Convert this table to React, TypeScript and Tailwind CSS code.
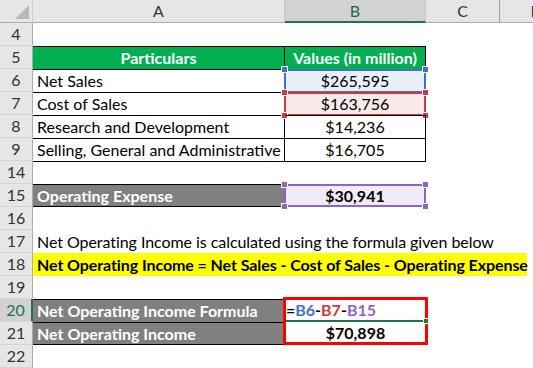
import React from 'react'

// reference highlight colours (Excel formula range boxes)
const refs = {
  blue: { box: 'border-[#3f6fcf]', dot: 'bg-[#3f6fcf]', fill: 'bg-[#e9eff9]' },
  red: { box: 'border-[#cc3a40]', dot: 'bg-[#cc3a40]', fill: 'bg-[#f9e9ea]' },
  purple: { box: 'border-[#8e63c7]', dot: 'bg-[#8e63c7]', fill: 'bg-[#efebf7]' },
}

type RefColor = keyof typeof refs

function RefBox({ color }: { color: RefColor }) {
  const r = refs[color]
  return (
    <span className={`pointer-events-none absolute -inset-px border-2 ${r.box}`}>
      <span className={`absolute -left-[5px] -top-[5px] size-[7px] border border-white ${r.dot}`} />
      <span className={`absolute -right-[5px] -top-[5px] size-[7px] border border-white ${r.dot}`} />
      <span className={`absolute -bottom-[5px] -left-[5px] size-[7px] border border-white ${r.dot}`} />
      <span className={`absolute -bottom-[5px] -right-[5px] size-[7px] border border-white ${r.dot}`} />
    </span>
  )
}

function RowHead({ n, active }: { n: number; active?: boolean }) {
  if (active) {
    return (
      <div className="flex w-[33px] shrink-0 items-center justify-center border-r-2 border-b border-r-[#217346] border-b-[#d4d4d4] bg-[#d2d2d2] text-[#217346]">
        {n}
      </div>
    )
  }
  return (
    <div className="flex w-[33px] shrink-0 items-center justify-center border-r border-b border-r-[#ababab] border-b-[#d4d4d4] bg-[#e6e6e6] text-[#333]">
      {n}
    </div>
  )
}

function Row({ n, active, children }: { n: number; active?: boolean; children?: React.ReactNode }) {
  return (
    <div className="flex h-[23px]">
      <RowHead n={n} active={active} />
      {children}
    </div>
  )
}

// table cells: A is 252px, B is 141px, both carry the black grid line on the right
const cellA = 'flex w-[252px] shrink-0 items-center border-t border-r border-black px-1'
const cellB = 'relative flex w-[141px] shrink-0 items-center justify-center border-t border-r border-black'

export default function App() {
  return (
    <div className="h-[368px] w-[533px] overflow-hidden bg-white font-['Lato','Liberation_Sans',sans-serif] text-[16px] text-black">
      {/* column headers */}
      <div className="flex h-[23px] text-[#333]">
        <div className="relative w-[33px] shrink-0 border-r border-b border-r-[#d0d0d0] border-b-[#ababab] bg-[#e6e6e6]">
          <svg className="absolute left-0 top-0" width="33" height="23" viewBox="0 0 33 23">
            <polygon points="15,19 29,19 29,5" fill="#b8b8b8" />
          </svg>
        </div>
        <div className="flex w-[252px] shrink-0 items-center justify-center border-r border-b border-r-[#c6c6c6] border-b-[#ababab] bg-[#e6e6e6]">
          A
        </div>
        <div className="flex w-[141px] shrink-0 items-center justify-center border-r border-b-2 border-r-[#c6c6c6] border-b-[#217346] bg-[#d2d2d2] text-[#1e6b41]">
          B
        </div>
        <div className="flex w-[74px] shrink-0 items-center justify-center border-r border-b border-r-[#9e9e9e] border-b-[#ababab] bg-[#e6e6e6]">
          C
        </div>
        <div className="flex w-[73px] shrink-0 items-center justify-center border-b border-b-[#ababab] bg-[#e6e6e6]">
          D
        </div>
      </div>

      <Row n={4} />

      <Row n={5}>
        <div className={`${cellA} justify-center bg-[#00b050] font-bold text-white`}>Particulars</div>
        <div className={`${cellB} bg-[#00b050] font-bold text-white`}>Values (in million)</div>
      </Row>

      <Row n={6}>
        <div className={cellA}>Net Sales</div>
        <div className={`${cellB} ${refs.blue.fill}`}>
          $265,595
          <RefBox color="blue" />
        </div>
      </Row>

      <Row n={7}>
        <div className={cellA}>Cost of Sales</div>
        <div className={`${cellB} ${refs.red.fill}`}>
          $163,756
          <RefBox color="red" />
        </div>
      </Row>

      <Row n={8}>
        <div className={cellA}>Research and Development</div>
        <div className={cellB}>$14,236</div>
      </Row>

      <Row n={9}>
        <div className={`${cellA} whitespace-nowrap`}>Selling, General and Administrative</div>
        <div className={cellB}>$16,705</div>
      </Row>

      <Row n={14}>
        <div className="w-[252px] shrink-0 border-t border-black" />
        <div className="w-[141px] shrink-0 border-t border-black" />
      </Row>

      <Row n={15}>
        <div className="flex w-[252px] shrink-0 items-center border-y border-r border-black bg-[#808080] px-1 font-bold text-white">
          Operating Expense
        </div>
        <div className={`relative flex w-[141px] shrink-0 items-center justify-center border-y border-r border-black font-bold ${refs.purple.fill}`}>
          $30,941
          <RefBox color="purple" />
        </div>
      </Row>

      <Row n={16} />

      <Row n={17}>
        <div className="flex items-center whitespace-nowrap px-1 tracking-[-0.06px]">
          Net Operating Income is calculated using the formula given below
        </div>
      </Row>

      <Row n={18}>
        <div className="flex w-[494px] shrink-0 items-center whitespace-nowrap bg-[#ffff00] px-1 font-bold tracking-[-0.08px]">
          Net Operating Income = Net Sales - Cost of Sales - Operating Expense
        </div>
      </Row>

      <Row n={19} />

      <Row n={20} active>
        <div className="flex w-[252px] shrink-0 items-center border-t border-r border-black bg-[#808080] px-1 font-bold text-white">
          Net Operating Income Formula
        </div>
        <div className="relative flex w-[141px] shrink-0 items-center border-t border-b-2 border-t-black border-b-[#217346] pl-px font-bold">
          <span>=</span>
          <span className="text-[#3f6fcf]">B6</span>
          <span>-</span>
          <span className="text-[#cc3a40]">B7</span>
          <span>-</span>
          <span className="text-[#8e63c7]">B15</span>
          {/* red annotation box around B20:B21 */}
          <span className="pointer-events-none absolute -left-[2px] -top-[3px] z-10 h-[48px] w-[145px] border-[3px] border-[#ff0000]" />
          <span className="absolute -bottom-[4px] -right-[3px] z-20 size-[6px] border border-white bg-[#217346]" />
        </div>
      </Row>

      <Row n={21}>
        <div className="flex w-[252px] shrink-0 items-center border-y border-r border-black bg-[#808080] px-1 font-bold text-white">
          Net Operating Income
        </div>
        <div className="flex w-[141px] shrink-0 items-center justify-center border-b border-black font-bold">
          $70,898
        </div>
      </Row>

      <Row n={22} />
    </div>
  )
}
